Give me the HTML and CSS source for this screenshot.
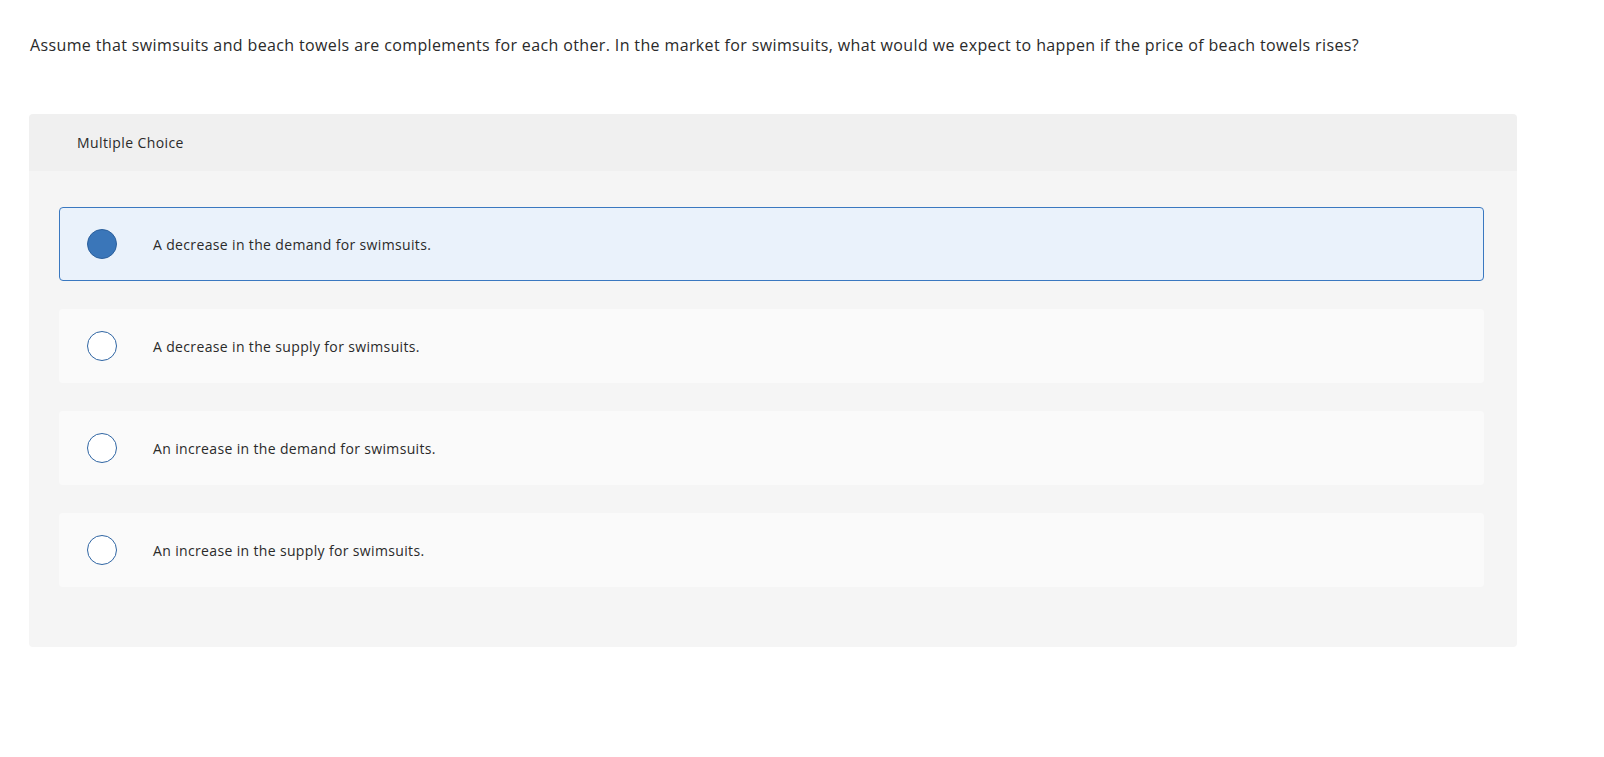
FILE: index.html
```html
<!DOCTYPE html>
<html>
<head>
<meta charset="utf-8">
<link rel="stylesheet" href="styles.css">
</head>
<body>
<div class="page">
  <p class="question">Assume that swimsuits and beach towels are complements for each other. In the market for swimsuits, what would we expect to happen if the price of beach towels rises?</p>
  <div class="panel">
    <div class="panel-head">Multiple Choice</div>
    <div class="panel-body">
      <div class="option selected"><span class="radio"></span><span class="label">A decrease in the demand for swimsuits.</span></div>
      <div class="option"><span class="radio"></span><span class="label">A decrease in the supply for swimsuits.</span></div>
      <div class="option"><span class="radio"></span><span class="label">An increase in the demand for swimsuits.</span></div>
      <div class="option"><span class="radio"></span><span class="label">An increase in the supply for swimsuits.</span></div>
    </div>
  </div>
</div>
</body>
</html>
```

FILE: styles.css
```css
html, body {
  margin: 0;
  padding: 0;
  background: #ffffff;
}
body {
  font-family: "Open Sans", "Liberation Sans", sans-serif;
  color: #2a2a2a;
}
.page {
  padding: 34px 0 0 29px;
  width: 1488px;
}
.question {
  margin: 0 0 0 1px;
  font-size: 16px;
  letter-spacing: 0.37px;
  line-height: 22px;
}
.panel {
  margin-top: 58px;
  border-radius: 4px;
  overflow: hidden;
}
.panel-head {
  background: #f0f0f0;
  height: 57px;
  display: flex;
  align-items: center;
  padding-left: 48px;
  font-size: 14px;
  letter-spacing: 0.4px;
}
.panel-body {
  background: #f5f5f5;
  padding: 36px 33px 60px 30px;
  display: flex;
  flex-direction: column;
  gap: 28px;
}
.option {
  height: 74px;
  box-sizing: border-box;
  background: #fafafa;
  border-radius: 4px;
  display: flex;
  align-items: center;
  padding-left: 28px;
  font-size: 14px;
  letter-spacing: 0.35px;
}
.option.selected {
  background: #eaf2fb;
  border: 1px solid #3a78c0;
  padding-left: 27px;
}
.radio {
  width: 30px;
  height: 30px;
  box-sizing: border-box;
  border-radius: 50%;
  border: 1.5px solid #2f65a3;
  background: #ffffff;
  flex: none;
  margin-right: 36px;
}
.option.selected .radio {
  background: #3a76b9;
  border-color: #2d609c;
}
```
